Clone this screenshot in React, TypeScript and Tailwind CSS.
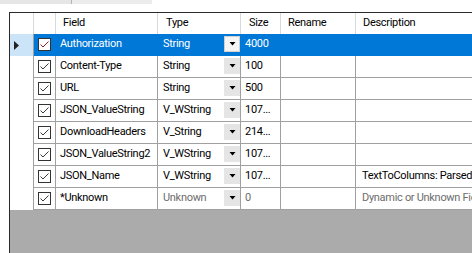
const rows = [
  { field: "Authorization", type: "String", size: "4000", desc: "", selected: true },
  { field: "Content-Type", type: "String", size: "100", desc: "" },
  { field: "URL", type: "String", size: "500", desc: "" },
  { field: "JSON_ValueString", type: "V_WString", size: "107...", desc: "" },
  { field: "DownloadHeaders", type: "V_String", size: "214...", desc: "" },
  { field: "JSON_ValueString2", type: "V_WString", size: "107...", desc: "" },
  { field: "JSON_Name", type: "V_WString", size: "107...", desc: "TextToColumns: Parsed" },
  { field: "*Unknown", type: "Unknown", size: "0", desc: "Dynamic or Unknown Field", dim: true },
];

const Check = ({ selected }: { selected?: boolean }) => (
  <svg width="13" height="13" viewBox="0 0 13 13">
    <rect x="0.5" y="0.5" width="12" height="12" fill="#fff" stroke="#333" />
    <polyline points="2.5,6.5 5,9 10.5,3.5" fill="none" stroke={selected ? "#8a2424" : "#3a3a3a"} strokeWidth="1" />
  </svg>
);

const Arrow = () => (
  <svg width="7" height="4" viewBox="0 0 7 4">
    <polygon points="0.5,0 6.5,0 3.5,3.5" fill="#000" />
  </svg>
);

export default function App() {
  return (
    <div className="w-[472px] h-[253px] overflow-hidden bg-white flex flex-col font-['Roboto',sans-serif] text-[11px] tracking-[-0.3px] text-black">
      {/* tab strip remnants */}
      <div className="flex h-[4px] shrink-0">
        <div className="w-[72px] bg-[#e6e6e6] border-r border-[#b5b5b5]" />
        <div className="w-[80px] bg-[#ececec]" />
      </div>
      <div className="h-[8px] shrink-0" />
      <div className="ml-[9px] flex-1 flex flex-col bg-[#ababab] border-l border-t border-[#2b2b2b] w-[600px]">
        {/* header */}
        <div className="flex h-[21px] bg-white shrink-0">
          <div className="w-[24px] border-r border-[#d9d9d9]" />
          <div className="w-[22px] border-r border-[#d9d9d9]" />
          <div className="w-[102px] border-r border-[#d9d9d9] pl-[7px] flex items-center">Field</div>
          <div className="w-[83px] border-r border-[#d9d9d9] pl-[8px] flex items-center">Type</div>
          <div className="w-[40px] border-r border-[#d9d9d9] pl-[8px] flex items-center">Size</div>
          <div className="w-[75px] border-r border-[#d9d9d9] pl-[7px] flex items-center">Rename</div>
          <div className="w-[200px] pl-[7px] flex items-center">Description</div>
        </div>
        {rows.map((r) => {
          const sel = r.selected;
          const cell = sel
            ? "bg-[#0078d7] text-white border-b border-r border-[#0078d7]"
            : "bg-white border-b border-r border-[#a0a0a0]";
          const dim = r.dim ? "text-[#6d6d6d]" : "";
          return (
            <div key={r.field} className="flex h-[22px] shrink-0">
              <div
                className={`w-[24px] border-r border-[#a0a0a0] flex items-center pl-[4px] ${
                  sel ? "bg-[#cce4f7]" : "bg-white"
                }`}
              >
                {sel && (
                  <svg width="5" height="9" viewBox="0 0 5 9">
                    <polygon points="0,0 5,4.5 0,9" fill="#222" />
                  </svg>
                )}
              </div>
              <div className={`w-[22px] flex items-center justify-center ${cell}`}>
                <Check selected={sel} />
              </div>
              <div className={`w-[102px] pl-[4px] flex items-center whitespace-nowrap ${cell}`}>{r.field}</div>
              <div className={`w-[83px] pl-[5px] flex justify-between whitespace-nowrap ${cell} ${dim}`}>
                <span className="self-center">{r.type}</span>
                <div
                  className={`mt-[2px] w-[16px] h-[16px] flex items-center justify-center ${
                    sel ? "bg-[#f5f5f5] border border-[#d0d0d0]" : "bg-[#e5e5e5]"
                  }`}
                >
                  <Arrow />
                </div>
              </div>
              <div className={`w-[40px] pl-[4px] flex items-center whitespace-nowrap ${cell} ${dim}`}>{r.size}</div>
              <div className={`w-[75px] ${cell}`} />
              <div className={`w-[200px] pl-[6px] flex items-center whitespace-nowrap ${cell} ${dim}`}>
                {r.desc}
              </div>
            </div>
          );
        })}
      </div>
    </div>
  );
}
